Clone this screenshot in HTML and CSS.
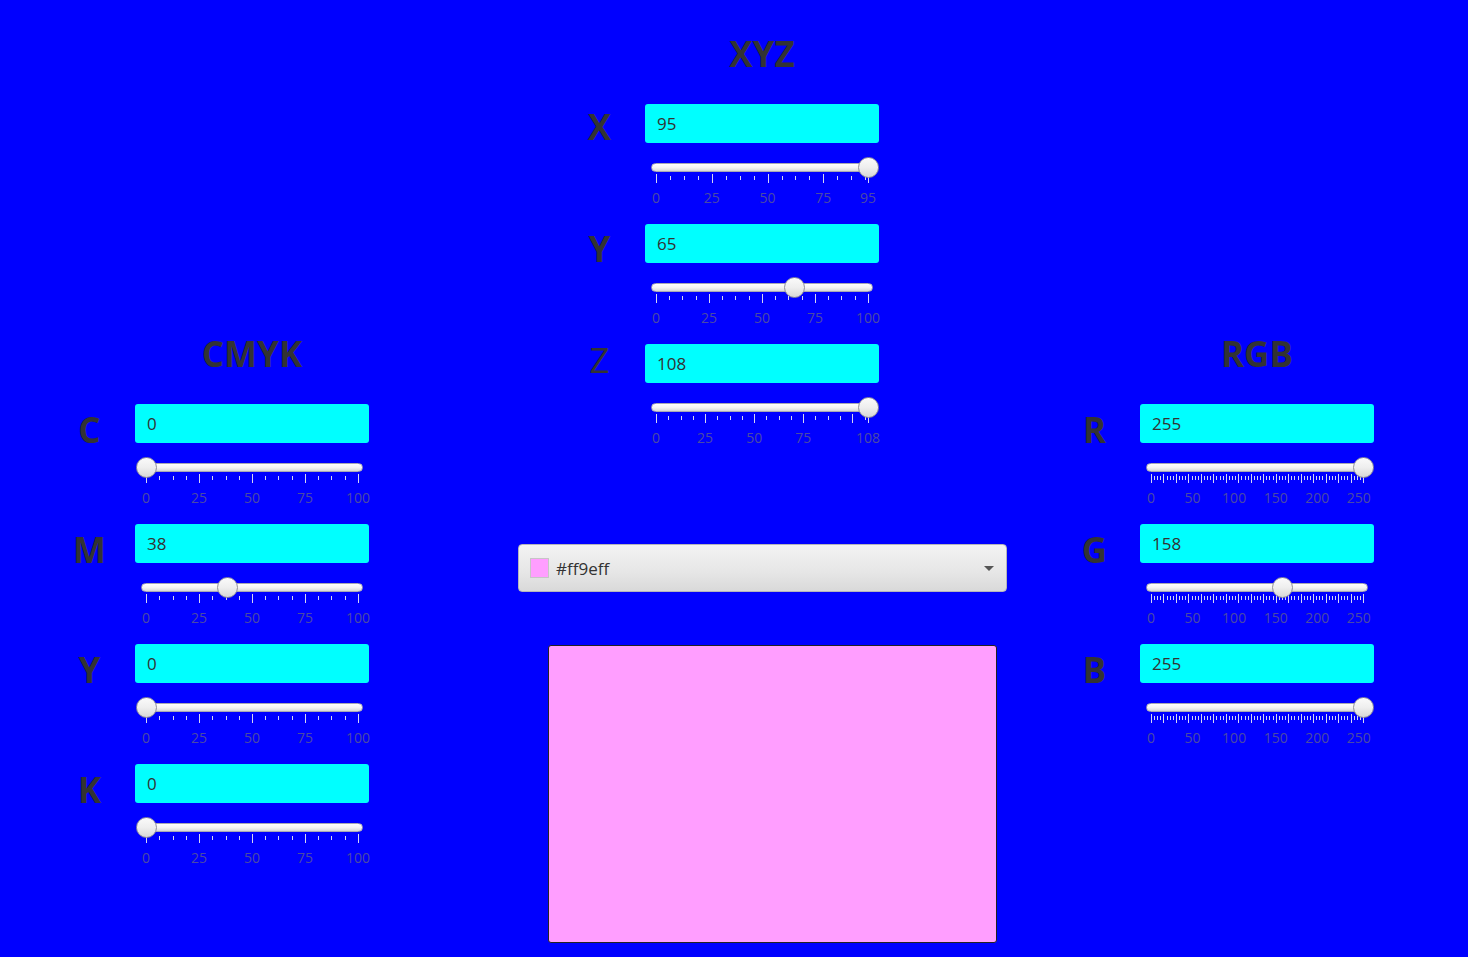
FILE: index.html
```html
<!DOCTYPE html>
<html lang="en">
<head>
<meta charset="utf-8">
<title>Color Converter</title>
<link rel="stylesheet" href="styles.css">
</head>
<body>
<main class="app">
  <section class="column column-side">
    <div class="group">
      <h2 class="group-title">CMYK</h2>
      <div class="row">
        <span class="row-label">C</span>
        <div class="control">
          <div class="field">0</div>
          <div class="slider">
            <div class="track"></div>
            <div class="scale scale-100">
              <div class="ticks"></div>
              <span class="tick-label" style="left:0%">0</span>
              <span class="tick-label" style="left:25%">25</span>
              <span class="tick-label" style="left:50%">50</span>
              <span class="tick-label" style="left:75%">75</span>
              <span class="tick-label" style="left:100%">100</span>
              <div class="thumb" style="left:0%"></div>
            </div>
          </div>
        </div>
      </div>
      <div class="row">
        <span class="row-label">M</span>
        <div class="control">
          <div class="field">38</div>
          <div class="slider">
            <div class="track"></div>
            <div class="scale scale-100">
              <div class="ticks"></div>
              <span class="tick-label" style="left:0%">0</span>
              <span class="tick-label" style="left:25%">25</span>
              <span class="tick-label" style="left:50%">50</span>
              <span class="tick-label" style="left:75%">75</span>
              <span class="tick-label" style="left:100%">100</span>
              <div class="thumb" style="left:38%"></div>
            </div>
          </div>
        </div>
      </div>
      <div class="row">
        <span class="row-label">Y</span>
        <div class="control">
          <div class="field">0</div>
          <div class="slider">
            <div class="track"></div>
            <div class="scale scale-100">
              <div class="ticks"></div>
              <span class="tick-label" style="left:0%">0</span>
              <span class="tick-label" style="left:25%">25</span>
              <span class="tick-label" style="left:50%">50</span>
              <span class="tick-label" style="left:75%">75</span>
              <span class="tick-label" style="left:100%">100</span>
              <div class="thumb" style="left:0%"></div>
            </div>
          </div>
        </div>
      </div>
      <div class="row">
        <span class="row-label">K</span>
        <div class="control">
          <div class="field">0</div>
          <div class="slider">
            <div class="track"></div>
            <div class="scale scale-100">
              <div class="ticks"></div>
              <span class="tick-label" style="left:0%">0</span>
              <span class="tick-label" style="left:25%">25</span>
              <span class="tick-label" style="left:50%">50</span>
              <span class="tick-label" style="left:75%">75</span>
              <span class="tick-label" style="left:100%">100</span>
              <div class="thumb" style="left:0%"></div>
            </div>
          </div>
        </div>
      </div>
    </div>
  </section>

  <section class="column column-middle">
    <div class="group group-xyz">
      <h2 class="group-title">XYZ</h2>
      <div class="row">
        <span class="row-label row-label-x">X</span>
        <div class="control">
          <div class="field">95</div>
          <div class="slider">
            <div class="track"></div>
            <div class="scale scale-95">
              <div class="ticks"></div>
              <span class="tick-label" style="left:0%">0</span>
              <span class="tick-label" style="left:26.316%">25</span>
              <span class="tick-label" style="left:52.632%">50</span>
              <span class="tick-label" style="left:78.947%">75</span>
              <span class="tick-label" style="left:100%">95</span>
              <div class="thumb" style="left:100%"></div>
            </div>
          </div>
        </div>
      </div>
      <div class="row">
        <span class="row-label row-label-y">Y</span>
        <div class="control">
          <div class="field">65</div>
          <div class="slider">
            <div class="track"></div>
            <div class="scale scale-100">
              <div class="ticks"></div>
              <span class="tick-label" style="left:0%">0</span>
              <span class="tick-label" style="left:25%">25</span>
              <span class="tick-label" style="left:50%">50</span>
              <span class="tick-label" style="left:75%">75</span>
              <span class="tick-label" style="left:100%">100</span>
              <div class="thumb" style="left:65%"></div>
            </div>
          </div>
        </div>
      </div>
      <div class="row">
        <span class="row-label row-label-light">Z</span>
        <div class="control">
          <div class="field">108</div>
          <div class="slider">
            <div class="track"></div>
            <div class="scale scale-108">
              <div class="ticks"></div>
              <span class="tick-label" style="left:0%">0</span>
              <span class="tick-label" style="left:23.148%">25</span>
              <span class="tick-label" style="left:46.296%">50</span>
              <span class="tick-label" style="left:69.444%">75</span>
              <span class="tick-label" style="left:100%">108</span>
              <div class="thumb" style="left:100%"></div>
            </div>
          </div>
        </div>
      </div>
    </div>

    <div class="combo">
      <span class="swatch"></span>
      <span class="combo-text">#ff9eff</span>
      <span class="combo-arrow"></span>
    </div>

    <div class="preview"></div>
  </section>

  <section class="column column-side column-right">
    <div class="group">
      <h2 class="group-title">RGB</h2>
      <div class="row">
        <span class="row-label">R</span>
        <div class="control">
          <div class="field">255</div>
          <div class="slider">
            <div class="track"></div>
            <div class="scale scale-255">
              <div class="ticks"></div>
              <span class="tick-label" style="left:0%">0</span>
              <span class="tick-label" style="left:19.608%">50</span>
              <span class="tick-label" style="left:39.216%">100</span>
              <span class="tick-label" style="left:58.824%">150</span>
              <span class="tick-label" style="left:78.431%">200</span>
              <span class="tick-label" style="left:98.039%">250</span>
              <div class="thumb" style="left:100%"></div>
            </div>
          </div>
        </div>
      </div>
      <div class="row">
        <span class="row-label">G</span>
        <div class="control">
          <div class="field">158</div>
          <div class="slider">
            <div class="track"></div>
            <div class="scale scale-255">
              <div class="ticks"></div>
              <span class="tick-label" style="left:0%">0</span>
              <span class="tick-label" style="left:19.608%">50</span>
              <span class="tick-label" style="left:39.216%">100</span>
              <span class="tick-label" style="left:58.824%">150</span>
              <span class="tick-label" style="left:78.431%">200</span>
              <span class="tick-label" style="left:98.039%">250</span>
              <div class="thumb" style="left:61.961%"></div>
            </div>
          </div>
        </div>
      </div>
      <div class="row">
        <span class="row-label">B</span>
        <div class="control">
          <div class="field">255</div>
          <div class="slider">
            <div class="track"></div>
            <div class="scale scale-255">
              <div class="ticks"></div>
              <span class="tick-label" style="left:0%">0</span>
              <span class="tick-label" style="left:19.608%">50</span>
              <span class="tick-label" style="left:39.216%">100</span>
              <span class="tick-label" style="left:58.824%">150</span>
              <span class="tick-label" style="left:78.431%">200</span>
              <span class="tick-label" style="left:98.039%">250</span>
              <div class="thumb" style="left:100%"></div>
            </div>
          </div>
        </div>
      </div>
    </div>
  </section>
</main>
</body>
</html>
```

FILE: styles.css
```css
* {
  box-sizing: border-box;
}

html, body {
  margin: 0;
  padding: 0;
  height: 100%;
}

body {
  background: #0000ff;
  font-family: "Open Sans", "DejaVu Sans", sans-serif;
  color: #333333;
  overflow: hidden;
}

.app {
  display: flex;
  align-items: flex-start;
  padding-left: 47px;
}

.column-side {
  width: 322px;
  padding-top: 334px;
}

.column-middle {
  width: 489px;
  margin-left: 149px;
  padding-top: 34px;
  display: flex;
  flex-direction: column;
}

.column-right {
  margin-left: 45px;
}

.group {
  display: grid;
  grid-template-columns: 88px 234px;
}

.group-xyz {
  margin-left: 39px;
}

.group-title {
  grid-column: 2;
  margin: 0 0 30px;
  height: 40px;
  line-height: 40px;
  font-size: 35px;
  font-weight: 700;
  text-align: center;
  color: #333333;
}

.row {
  grid-column: 1 / span 2;
  display: grid;
  grid-template-columns: 88px 234px;
  height: 120px;
}

.row-label {
  font-size: 35px;
  font-weight: 700;
  line-height: 52px;
  text-align: center;
  color: #333333;
  padding-right: 3px;
}

.row-label-x {
  line-height: 46px;
}

.row-label-y {
  line-height: 49px;
}

.row-label-light {
  font-weight: 400;
  line-height: 32px;
}

.control {
  display: flex;
  flex-direction: column;
}

.field {
  height: 39px;
  line-height: 40px;
  padding-left: 12px;
  background: #00ffff;
  border-radius: 3px;
  font-size: 17px;
  color: #333333;
}

.slider {
  position: relative;
  height: 81px;
}

.track {
  position: absolute;
  top: 20px;
  left: 6px;
  right: 6px;
  height: 9px;
  border-radius: 5px;
  border: 1px solid #a9a9b4;
  background: linear-gradient(#ffffff 0%, #f4f4f4 50%, #d9d9d9 100%);
}

.scale {
  position: absolute;
  top: 0;
  bottom: 0;
  left: 11px;
  width: 212px;
  --tc: #d6d6f2;
}

.scale-100 { --major: 53px; --minor: 13.25px; }
.scale-95 { --major: 55.79px; --minor: 13.947px; }
.scale-108 { --major: 49.074px; --minor: 12.268px; }
.scale-255 { --major: 12.471px; --minor: 3.118px; }

.ticks {
  position: absolute;
  top: 31px;
  left: 0;
  width: 213px;
  height: 9px;
  background:
    linear-gradient(var(--tc), var(--tc)) right top / 1px 9px no-repeat,
    repeating-linear-gradient(to right, var(--tc) 0 1px, transparent 1px var(--major)) left top / 100% 9px no-repeat,
    repeating-linear-gradient(to right, var(--tc) 0 1px, transparent 1px var(--minor)) left 2px / 100% 4px no-repeat;
}

.tick-label {
  position: absolute;
  top: 47px;
  transform: translateX(-50%);
  font-size: 14px;
  line-height: 16px;
  color: #4a4aa6;
  white-space: nowrap;
}

.thumb {
  position: absolute;
  top: 14px;
  width: 21px;
  height: 21px;
  margin-left: -10px;
  border-radius: 50%;
  border: 1px solid #8f8f9a;
  background: linear-gradient(#fafafa 0%, #eeeeee 50%, #d6d6d6 100%);
}

.combo {
  margin-top: 80px;
  height: 48px;
  display: flex;
  align-items: center;
  padding: 0 11px;
  border: 1px solid #b4b4bc;
  border-radius: 4px;
  background: linear-gradient(#f3f3f3 0%, #e6e6e6 60%, #d9d9d9 100%);
}

.swatch {
  width: 19px;
  height: 20px;
  background: #ff9eff;
  border: 1px solid #c6c6c6;
  margin-right: 7px;
}

.combo-text {
  font-size: 17px;
  color: #333333;
}

.combo-arrow {
  margin-left: auto;
  margin-right: 1px;
  width: 0;
  height: 0;
  border-left: 5px solid transparent;
  border-right: 5px solid transparent;
  border-top: 5px solid #555555;
}

.preview {
  margin-top: 53px;
  margin-left: 30px;
  width: 449px;
  height: 298px;
  background: #ff9eff;
  border: 1px solid #222222;
  border-radius: 3px;
}
```
